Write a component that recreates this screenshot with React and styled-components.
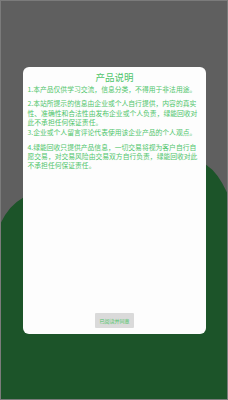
import React from "react";
import styled, { createGlobalStyle } from "styled-components";

const Global = createGlobalStyle`
  html, body { margin: 0; padding: 0; }
  body { width: 228px; height: 400px; overflow: hidden; font-family: "Noto Sans CJK SC", "Noto Sans", sans-serif; }
`;

const Frame = styled.div`
  width: 228px;
  height: 400px;
  box-sizing: border-box;
  display: grid;
  grid-template: 1fr / 1fr;
  background: #5f5f5f;
  border: 1.5px solid rgba(255, 255, 255, 0.18);
  overflow: hidden;
`;

const Layer = styled.div`
  grid-area: 1 / 1;
  display: flex;
  min-height: 0;
`;

const Blob = styled.svg`
  display: block;
  width: 100%;
  height: 100%;
`;

const Overlay = styled(Layer)`
  align-items: center;
  justify-content: center;
`;

const Card = styled.div`
  width: 183px;
  height: 267px;
  box-sizing: border-box;
  background: #fdfdfd;
  border-radius: 6px;
  padding: 4px 4px 6px 5px;
  display: flex;
  flex-direction: column;
  color: #4fc56b;
`;

const Title = styled.div`
  text-align: center;
  font-size: 9.5px;
  line-height: 13px;
  margin-bottom: 1px;
`;

const Para = styled.p`
  margin: 0 0 ${(p) => (p.$gap ? "5.5px" : "0")};
  font-size: 6.8px;
  line-height: 9.4px;
  letter-spacing: 0;
`;

const Button = styled.div`
  margin: auto auto 0;
  width: 39px;
  height: 15px;
  background: #dadada;
  border-radius: 1px;
  display: flex;
  align-items: center;
  justify-content: center;
  font-size: 5px;
  color: #4cc466;
`;

export default function App() {
  return (
    <>
      <Global />
      <Frame>
        <Layer>
          <Blob viewBox="0 0 225 397" preserveAspectRatio="none">
            <path
              d="M0 397 L0 221 Q8 204 21.5 196.5 C60 168 150 132 204.5 163.5 Q216 171 225 191 L225 397 Z"
              fill="#1c5429"
            />
          </Blob>
        </Layer>
        <Overlay>
          <Card>
            <Title>产品说明</Title>
            <Para $gap>1.本产品仅供学习交流，信息分类，不得用于非法用途。</Para>
            <Para>
              2.本站所提示的信息由企业或个人自行提供，内容的真实性、准确性和合法性由发布企业或个人负责，绿能回收对此不承担任何保证责任。
            </Para>
            <Para $gap>3.企业或个人留言评论代表使用该企业产品的个人观点。</Para>
            <Para>
              4.绿能回收只提供产品信息，一切交易将视为客户自行自愿交易，对交易风险由交易双方自行负责，绿能回收对此不承担任何保证责任。
            </Para>
            <Button>已阅读并同意</Button>
          </Card>
        </Overlay>
      </Frame>
    </>
  );
}
